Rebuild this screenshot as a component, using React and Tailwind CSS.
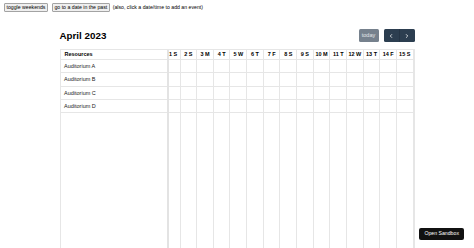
import { ChevronLeft, ChevronRight } from "lucide-react";

const days = [
  "1 S", "2 S", "3 M", "4 T", "5 W", "6 T", "7 F", "8 S",
  "9 S", "10 M", "11 T", "12 W", "13 T", "14 F", "15 S",
];

const resources = ["Auditorium A", "Auditorium B", "Auditorium C", "Auditorium D"];

function cellWidth(i) {
  if (i === 0) return "w-[12px] shrink-0";
  if (i === days.length - 1) return "flex-1";
  return "w-[16.67px] shrink-0";
}

function SlotRow({ className, children }) {
  return (
    <div className={`flex ${className}`}>
      {days.map((d, i) => (
        <div key={d} className={`${cellWidth(i)} h-full border-r border-[#e6e6e6]`}>
          {children ? children(d, i) : null}
        </div>
      ))}
    </div>
  );
}

export default function App() {
  return (
    <div className="relative h-[248px] w-full overflow-hidden bg-white font-['Liberation_Sans',Arial,sans-serif] text-black">
      {/* Top controls */}
      <div className="flex items-center pl-[4px] pt-[3px]">
        <button className="h-[8.5px] px-[1.5px] border border-[#a3a3a3] bg-[#efefef] rounded-[1px] text-[5.2px] leading-none">
          toggle weekends
        </button>
        <button className="ml-[4px] h-[8.5px] px-[1.5px] border border-[#a3a3a3] bg-[#efefef] rounded-[1px] text-[5.2px] leading-none">
          go to a date in the past
        </button>
        <span className="ml-[3px] text-[5.2px] leading-none">
          (also, click a date/time to add an event)
        </span>
      </div>

      {/* Calendar */}
      <div className="mx-auto mt-[17.5px] w-[355px]">
        {/* Toolbar */}
        <div className="flex h-[13px] items-center justify-between">
          <h2 className="text-[9.8px] font-bold leading-none">April 2023</h2>
          <div className="flex items-center gap-[5px]">
            <div className="flex h-[12.7px] w-[20px] items-center justify-center rounded-[1.5px] bg-[#76818d] text-[5.5px] text-white/80">
              today
            </div>
            <div className="flex h-[13.5px] w-[31px] overflow-hidden rounded-[1.5px] bg-[#2c3e50]">
              <div className="flex flex-1 items-center justify-center border-r border-[#253546]">
                <ChevronLeft className="h-[6px] w-[6px] text-white" strokeWidth={3} />
              </div>
              <div className="flex flex-1 items-center justify-center">
                <ChevronRight className="h-[6px] w-[6px] text-white" strokeWidth={3} />
              </div>
            </div>
          </div>
        </div>

        {/* Timeline */}
        <div className="mt-[7px] flex h-[220px] border border-b-0 border-[#e6e6e6] text-[5.5px]">
          {/* Resource area */}
          <div className="flex w-[106px] shrink-0 flex-col">
            <div className="flex h-[10px] shrink-0 items-center border-b border-[#e6e6e6] pl-[4px] font-bold">
              Resources
            </div>
            {resources.map((r) => (
              <div
                key={r}
                className="flex h-[13.33px] shrink-0 items-center border-b border-[#e6e6e6] pl-[3.5px] text-[#222]"
              >
                {r}
              </div>
            ))}
          </div>

          {/* Divider */}
          <div className="w-[2px] shrink-0 bg-[#e3e3e3]" />

          {/* Time area */}
          <div className="flex flex-1 flex-col">
            <SlotRow className="h-[10px] shrink-0 border-b border-[#e6e6e6]">
              {(d, i) => (
                <div
                  className={`flex h-full items-center whitespace-nowrap font-bold ${
                    i === 0 ? "pl-[0.5px]" : "justify-center"
                  }`}
                >
                  {d}
                </div>
              )}
            </SlotRow>
            {resources.map((r) => (
              <SlotRow key={r} className="h-[13.33px] shrink-0 border-b border-[#e6e6e6]" />
            ))}
            <SlotRow className="flex-1" />
          </div>
        </div>
      </div>

      {/* Floating sandbox button */}
      <div className="absolute bottom-[8px] right-[10px] flex h-[12px] items-center rounded-[2px] bg-[#111] px-[5px] text-[5.2px] text-white">
        Open Sandbox
      </div>
    </div>
  );
}
